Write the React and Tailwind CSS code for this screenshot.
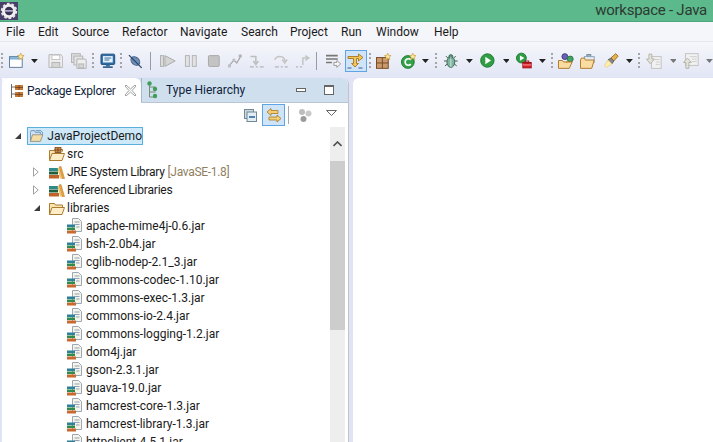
import React from "react";

const font = { fontFamily: "Roboto, 'Noto Sans', sans-serif" };

const menus = [
  ["File", "w-[32px]"],
  ["Edit", "w-[34px]"],
  ["Source", "w-[50px]"],
  ["Refactor", "w-[58px]"],
  ["Navigate", "w-[61px]"],
  ["Search", "w-[49px]"],
  ["Project", "w-[51px]"],
  ["Run", "w-[35px]"],
  ["Window", "w-[58px]"],
  ["Help", "w-[40px]"],
];

function AppIcon() {
  return (
    <svg width="18" height="18" viewBox="0 0 18 18">
      <rect x="0" y="0" width="18" height="18" fill="#4a3f6b" />
      <circle cx="9" cy="9" r="7" fill="#f1f1f1" stroke="#e8e8e8" strokeWidth="2.400" strokeDasharray="2.600 1.800" />
      <circle cx="9" cy="9" r="5.200" fill="#f4f4f4" />
      <circle cx="9" cy="9" r="4.200" fill="#3a3159" />
      <rect x="4.800" y="8.200" width="8.400" height="1.400" fill="#c9c4de" />
    </svg>
  );
}

function Grip({ className = "" }) {
  return (
    <div className={`flex h-[16px] w-[2px] flex-col justify-between ${className}`}>
      <span className="block h-[2px] w-[2px] bg-[#a5a5a5]" />
      <span className="block h-[2px] w-[2px] bg-[#a5a5a5]" />
      <span className="block h-[2px] w-[2px] bg-[#a5a5a5]" />
      <span className="block h-[2px] w-[2px] bg-[#a5a5a5]" />
    </div>
  );
}

function Arrow({ className = "", color = "#222" }) {
  return (
    <svg width="7" height="4" viewBox="0 0 7 4" className={className}>
      <path d="M0 0h7L3.500 4z" fill={color} />
    </svg>
  );
}

function Sep({ className = "" }) {
  return <div className={`h-[18px] w-[1px] bg-[#9a9ca3] ${className}`} />;
}

function Ico({ w = 16, h = 16, className = "", children }) {
  return (
    <svg width={w} height={h} viewBox="0 0 16 16" className={className}>
      {children}
    </svg>
  );
}

function NewIcon({ className }) {
  return (
    <Ico className={className}>
      <rect x="0.500" y="3.500" width="13" height="11" fill="#fff" stroke="#5f7f9f" />
      <rect x="1" y="4" width="12" height="2.500" fill="#7fb0dc" />
      <path d="M12 0l1 2.200 2.400.300-1.800 1.600.5 2.400-2.100-1.200-2.100 1.200.5-2.400-1.800-1.600 2.400-.3z" fill="#fbe7a0" stroke="#c79a3a" strokeWidth="0.700" />
    </Ico>
  );
}

function SaveIcon({ className }) {
  return (
    <Ico className={className}>
      <path d="M1 1.500h12l2 2v11H1z" fill="#eee" stroke="#b5b5b5" />
      <rect x="4" y="2" width="8" height="4.500" fill="#fff" stroke="#c4c4c4" />
      <rect x="4" y="9.500" width="8" height="5" fill="#d6d6d6" stroke="#b5b5b5" />
    </Ico>
  );
}

function SaveAllIcon({ className }) {
  return (
    <Ico className={className}>
      <rect x="0.500" y="0.500" width="9" height="9" fill="#ddd" stroke="#b5b5b5" />
      <rect x="3" y="3" width="9" height="9" fill="#e4e4e4" stroke="#b5b5b5" />
      <path d="M6 6h8.500l1 1v8.500H6z" fill="#eee" stroke="#b0b0b0" />
      <rect x="8" y="11" width="5" height="4" fill="#d6d6d6" stroke="#b5b5b5" />
    </Ico>
  );
}

function MonitorIcon({ className }) {
  return (
    <Ico className={className}>
      <rect x="1" y="1" width="14" height="10.500" rx="1" fill="#2f6ea5" stroke="#1f4f7f" />
      <rect x="3" y="3" width="10" height="6.500" fill="#eaf2fa" />
      <path d="M4.500 5h7M4.500 7h5" stroke="#2f6ea5" strokeWidth="1" />
      <rect x="6" y="11.500" width="4" height="2" fill="#2f6ea5" />
      <rect x="3" y="13.500" width="10" height="1.500" fill="#1f4f7f" />
    </Ico>
  );
}

function SkipIcon({ className }) {
  return (
    <Ico className={className}>
      <ellipse cx="7.500" cy="8" rx="5" ry="3.700" transform="rotate(40 7.500 8)" fill="#6f8fb5" stroke="#3b5a86" />
      <path d="M1 2l13 13" stroke="#29476f" strokeWidth="1.300" />
    </Ico>
  );
}

function ResumeIcon({ className }) {
  return (
    <Ico className={className}>
      <rect x="0.500" y="2.500" width="3" height="11" fill="#ddd" stroke="#b0b0b0" />
      <path d="M5 2.500L15.500 8 5 13.500z" fill="#d5d5d5" stroke="#aaa" />
    </Ico>
  );
}

function PauseIcon({ className }) {
  return (
    <Ico className={className}>
      <rect x="2.500" y="2.500" width="4" height="11" fill="#e3e3e3" stroke="#b3b3b3" />
      <rect x="9.500" y="2.500" width="4" height="11" fill="#e3e3e3" stroke="#b3b3b3" />
    </Ico>
  );
}

function StopIcon({ className }) {
  return (
    <Ico className={className}>
      <rect x="2.500" y="2.500" width="11" height="11" rx="1" fill="#c4c4c4" stroke="#a8a8a8" />
    </Ico>
  );
}

function DisconnectIcon({ className }) {
  return (
    <Ico className={className}>
      <path d="M2 13L7 7l3 3 4-7" fill="none" stroke="#a5a5a5" strokeWidth="1.200" />
      <circle cx="2.500" cy="13" r="1.800" fill="#c0c0c0" />
      <circle cx="7" cy="7" r="1.500" fill="#c0c0c0" />
      <circle cx="13.500" cy="3" r="1.800" fill="#b5b5b5" />
    </Ico>
  );
}

function StepInIcon({ className }) {
  return (
    <Ico className={className}>
      <path d="M1.500 3.500H7v6M4.500 8L7 11.500 9.500 8" fill="none" stroke="#bdbdbd" strokeWidth="1.500" />
      <path d="M1 14h4M7 14h2M11 14h4" stroke="#b5b5b5" strokeWidth="1.200" />
    </Ico>
  );
}

function StepOverIcon({ className }) {
  return (
    <Ico className={className}>
      <path d="M2 7c0-5 10-5 10 1M9.500 6.500l2.500 3.500 2.500-3.500" fill="none" stroke="#c4c4c4" strokeWidth="1.500" />
      <path d="M2 14h4M8 14h2M12 14h3" stroke="#b5b5b5" strokeWidth="1.200" />
    </Ico>
  );
}

function StepRetIcon({ className }) {
  return (
    <Ico className={className}>
      <path d="M8 12V5h5M10.500 2.500L14 5l-3.500 2.500" fill="none" stroke="#c4c4c4" strokeWidth="1.500" />
      <path d="M1 14h2M5 14h2" stroke="#b5b5b5" strokeWidth="1.200" />
    </Ico>
  );
}

function ListIcon({ className }) {
  return (
    <Ico className={className}>
      <path d="M0 2.500h12M0 6h12M0 9.500h6" stroke="#777" strokeWidth="1.700" />
      <path d="M8 9.500h3V7.500l4 3.500-4 3.500v-2H8z" fill="#f5f5f5" stroke="#888" strokeWidth="0.800" />
    </Ico>
  );
}

function FilterIcon({ className }) {
  return (
    <Ico w={17} h={16} className={className}>
      <path d="M0.500 3.500H11V1l4.500 3.500L11 8V5.500H9v5h2L7.500 14 4 10.500h2v-5H0.500z" fill="#f3c45a" stroke="#a9771c" strokeWidth="0.900" />
      <path d="M0 15h4M11 15h4" stroke="#3b5a86" strokeWidth="1.200" />
    </Ico>
  );
}

function OpenTypeIcon({ className }) {
  return (
    <Ico className={className}>
      <rect x="0.500" y="4.500" width="12" height="11" fill="#c99a6b" stroke="#7a4a26" />
      <path d="M6.500 4.500v11M0.500 10h12" stroke="#7a4a26" />
      <path d="M12 0l1 2.200 2.400.3-1.800 1.600.5 2.400-2.100-1.200-2.100 1.200.5-2.400-1.800-1.600 2.400-.3z" fill="#fbe7a0" stroke="#c79a3a" strokeWidth="0.700" />
    </Ico>
  );
}

function NewClassIcon({ className }) {
  return (
    <Ico className={className}>
      <circle cx="7" cy="9" r="6.500" fill="#33a04a" stroke="#1f7a34" />
      <path d="M10 6.800A3.300 3.300 0 1 0 10 11.200" fill="none" stroke="#fff" strokeWidth="1.700" />
      <path d="M12 0l1 2.200 2.400.3-1.800 1.600.5 2.400-2.100-1.200-2.100 1.200.5-2.400-1.800-1.600 2.400-.3z" fill="#fbe7a0" stroke="#c79a3a" strokeWidth="0.700" />
    </Ico>
  );
}

function BugIcon({ className }) {
  return (
    <Ico className={className}>
      <path d="M3 3l2 2M13 3l-2 2M1 8h3M15 8h-3M2 13l2.500-2M14 13l-2.500-2" stroke="#4a5a4a" strokeWidth="1" />
      <ellipse cx="8" cy="9" rx="4" ry="5.500" fill="#7db5a0" stroke="#3d6d5c" />
      <circle cx="8" cy="3.500" r="2" fill="#5f8f80" stroke="#3d6d5c" />
      <path d="M8 4v10" stroke="#d4e6dc" />
    </Ico>
  );
}

function RunIcon({ className }) {
  return (
    <Ico w={15} h={15} className={className}>
      <circle cx="8" cy="8" r="7.300" fill="#2f9e44" stroke="#1e7a33" />
      <path d="M5.800 3.800L12 8l-6.200 4.200z" fill="#fff" />
    </Ico>
  );
}

function ExtIcon({ className }) {
  return (
    <Ico w={16} h={17} className={className}>
      <circle cx="5.500" cy="5.500" r="5" fill="#2f9e44" stroke="#1e7a33" />
      <path d="M4 2.800L8.500 5.500 4 8.200z" fill="#fff" />
      <rect x="7" y="10" width="8.500" height="5.500" fill="#d8202a" stroke="#9c1019" />
      <rect x="9.500" y="8.500" width="3.500" height="2" fill="none" stroke="#9c1019" />
      <path d="M7 12.500h8.500" stroke="#ff9a9a" />
    </Ico>
  );
}

function TaskIcon({ className }) {
  return (
    <Ico className={className}>
      <circle cx="7" cy="3.500" r="3" fill="#6a5fb0" stroke="#453a86" />
      <circle cx="12.500" cy="6" r="3" fill="#43a564" stroke="#2a7a45" />
      <path d="M0.500 7.500h4l1 1.500h4l-1 0h6l-3 6.500H0.500z" fill="#fbdca0" stroke="#b07a2c" />
    </Ico>
  );
}

function FolderIcon({ className }) {
  return (
    <Ico className={className}>
      <rect x="7" y="1.500" width="4" height="2" fill="#a9b8c8" stroke="#6f8296" />
      <rect x="4.500" y="3.500" width="10" height="6" fill="#e3ecf5" stroke="#8fa3b8" />
      <path d="M0.500 7l1-2h3l1 2h9l-2.500 8.500H0.500z" fill="#fbdca0" stroke="#b07a2c" />
    </Ico>
  );
}

function PencilIcon({ className }) {
  return (
    <Ico className={className}>
      <path d="M8 5l5-4.500 2.500 2.500L11 8z" fill="#e6b350" stroke="#a0702a" />
      <path d="M5 7l3-2 3 3-2 3z" fill="#8a8a8a" stroke="#5f5f5f" />
      <path d="M5 7l4 4-5.500 3.500L1.500 13z" fill="#fff0b0" stroke="#e5c870" strokeWidth="0.700" />
    </Ico>
  );
}

function NextAnnoIcon({ className }) {
  return (
    <Ico className={className}>
      <rect x="5.500" y="3.500" width="10" height="12" fill="#f1f1f1" stroke="#c2c2c2" />
      <path d="M8 6.500h6M10 9h4M10 11.500h4" stroke="#cfcfcf" />
      <path d="M3 1h3v5h2.500L4.500 11 .5 6H3z" fill="#e3e3dc" stroke="#b4b4aa" />
    </Ico>
  );
}

function PrevAnnoIcon({ className }) {
  return (
    <Ico className={className}>
      <rect x="2.500" y="0.500" width="13" height="12" fill="#f1f1f1" stroke="#c2c2c2" />
      <path d="M7 3.500h7M9 6h5M9 8.500h5" stroke="#cfcfcf" />
      <path d="M3 15.500v-6H.5L4.500 5l4 4.500H6v6z" fill="#e3e3dc" stroke="#b4b4aa" />
    </Ico>
  );
}

function PackageIcon() {
  return (
    <svg width="13" height="14" viewBox="0 0 13 14" className="shrink-0">
      <path d="M1.500 0v14M1.500 3H5M1.500 10H5" stroke="#6b6b6b" />
      <rect x="5" y="1" width="8" height="5" fill="#c77a35" />
      <rect x="5" y="8" width="8" height="5" fill="#c77a35" />
      <path d="M9 1v5M5 3.500h8M9 8v5M5 10.500h8" stroke="#6e3d14" strokeWidth="0.800" />
    </svg>
  );
}

function HierarchyIcon() {
  return (
    <svg width="11" height="18" viewBox="0 0 11 18" className="shrink-0">
      <path d="M2.500 2v9h6M2.500 6h6M2.500 11v5h6" fill="none" stroke="#7a8a7a" />
      <circle cx="2.500" cy="2.500" r="2.200" fill="#3e9e58" />
      <circle cx="8" cy="8" r="2.200" fill="#3e9e58" />
      <circle cx="8" cy="15" r="2.200" fill="#3e9e58" />
    </svg>
  );
}

function ProjectIcon() {
  return (
    <svg width="16" height="14" viewBox="0 0 16 14">
      <path d="M0.500 13.500V2.500l1-2h4l1 2h6v2" fill="#cfe2f3" stroke="#5f8ab0" />
      <path d="M0.500 13.500L3 5.500h12.500l-3 8z" fill="#f6dca5" stroke="#8b8b7a" />
      <path d="M7 0.500h6l2 2v3" fill="none" stroke="#5f8ab0" />
    </svg>
  );
}

function SrcIcon() {
  return (
    <svg width="16" height="14" viewBox="0 0 16 14">
      <path d="M0.500 13.500V3.500h5v-1h8v2" fill="#fbe3b0" stroke="#a97c2f" />
      <path d="M0.500 13.500L3 6.500h12.500l-2.500 7z" fill="#fdeec8" stroke="#a97c2f" />
      <rect x="6" y="0.500" width="6" height="5" fill="#c98a4c" stroke="#6e3d14" strokeWidth="0.700" />
      <path d="M9 0.500v5M6 3h6" stroke="#6e3d14" strokeWidth="0.700" />
    </svg>
  );
}

function OpenFolderIcon() {
  return (
    <svg width="16" height="13" viewBox="0 0 16 13">
      <path d="M0.500 12.500V1.500h5l1 1.500h7v2" fill="#fbe3b0" stroke="#a97c2f" />
      <path d="M0.500 12.500L3 5.500h12.500l-2.500 7z" fill="#fdeec8" stroke="#a97c2f" />
    </svg>
  );
}

function LibraryIcon() {
  return (
    <svg width="16" height="13" viewBox="0 0 16 13">
      <rect x="0" y="2" width="9" height="3" fill="#2f8a8a" />
      <rect x="0" y="5.500" width="9" height="3" fill="#1f5f3f" />
      <rect x="0" y="9" width="10" height="3.500" fill="#c0622a" />
      <path d="M10 1l2-.5 3.500 12h-2.500z" fill="#e8a33d" stroke="#a9702a" strokeWidth="0.500" />
      <path d="M8.500 2.500l1.500-.5 3 10.500h-2z" fill="#f2c569" />
    </svg>
  );
}

function JarIcon() {
  return (
    <svg width="16" height="16" viewBox="0 0 16 16">
      <path d="M5.500 0.500h6l3 3v10h-9z" fill="#f6f4e6" stroke="#9aa7b8" />
      <path d="M7.500 4h5M7.500 6.500h5M9 9h3.500" stroke="#8fa3c0" />
      <rect x="0" y="6.500" width="8" height="2.500" fill="#2d7f9a" />
      <rect x="0" y="9.500" width="8" height="2.500" fill="#2f8a4c" />
      <rect x="0" y="12.500" width="9" height="3" fill="#c9692f" />
    </svg>
  );
}

const jars = [
  "apache-mime4j-0.6.jar",
  "bsh-2.0b4.jar",
  "cglib-nodep-2.1_3.jar",
  "commons-codec-1.10.jar",
  "commons-exec-1.3.jar",
  "commons-io-2.4.jar",
  "commons-logging-1.2.jar",
  "dom4j.jar",
  "gson-2.3.1.jar",
  "guava-19.0.jar",
  "hamcrest-core-1.3.jar",
  "hamcrest-library-1.3.jar",
  "httpclient-4.5.1.jar",
];

function Twisty({ open }) {
  return open ? (
    <svg width="8" height="8" viewBox="0 0 8 8">
      <path d="M7 1v6H1z" fill="#3c3c3c" />
    </svg>
  ) : (
    <svg width="6" height="10" viewBox="0 0 6 10">
      <path d="M.5.800L5.200 5 .5 9.200z" fill="#fff" stroke="#a0a0a0" />
    </svg>
  );
}

function TreeRow({ twisty, icon, children }) {
  return (
    <div className="flex h-[18px] items-center whitespace-nowrap pl-[31px]">
      <span className="flex w-[16px] shrink-0 items-center">{twisty}</span>
      <span className="flex w-[18px] shrink-0 items-center">{icon}</span>
      {children}
    </div>
  );
}

export default function App() {
  return (
    <div className="flex h-[442px] w-[713px] flex-col overflow-hidden bg-[#dfe3f5] text-[12px] text-[#1a1a1a]" style={font}>
      <div className="flex h-[22px] shrink-0 items-center border-b border-[#4fa67c] bg-[#5cb98b]">
        <AppIcon />
        <span className="ml-auto pr-[6px] text-[15px] tracking-[-0.25px] text-[#2c3a33]">workspace - Java</span>
      </div>

      <div className="flex h-[19px] shrink-0 items-center bg-[#f5f6fa] pl-[6px]">
        {menus.map(([label, width]) => (
          <span key={label} className={width}>{label}</span>
        ))}
      </div>

      <div className="flex h-[36px] shrink-0 items-center border-t border-[#e6e7ec] bg-gradient-to-b from-[#f6f7fb] to-[#e2e6f5] pt-[2px]">
        <Grip className="ml-[1px]" />
        <NewIcon className="ml-[6px]" />
        <Arrow className="ml-[6px]" />
        <SaveIcon className="ml-[10px]" />
        <SaveAllIcon className="ml-[8px]" />
        <Grip className="ml-[5px]" />
        <MonitorIcon className="ml-[6px]" />
        <Grip className="ml-[4px]" />
        <SkipIcon className="ml-[6px]" />
        <Sep className="ml-[7px]" />
        <ResumeIcon className="ml-[9px]" />
        <PauseIcon className="ml-[7px]" />
        <StopIcon className="ml-[7px]" />
        <DisconnectIcon className="ml-[6px]" />
        <StepInIcon className="ml-[6px]" />
        <StepOverIcon className="ml-[8px]" />
        <StepRetIcon className="ml-[7px]" />
        <Sep className="ml-[5px]" />
        <ListIcon className="ml-[9px]" />
        <div className="ml-[3px] flex h-[22px] w-[23px] items-center justify-center border border-[#5fa5e5] bg-[#cfe4f8]">
          <FilterIcon />
        </div>
        <Grip className="ml-[2px]" />
        <OpenTypeIcon className="ml-[5px]" />
        <NewClassIcon className="ml-[9px]" />
        <Arrow className="ml-[6px]" />
        <Grip className="ml-[6px]" />
        <BugIcon className="ml-[6px]" />
        <Arrow className="ml-[7px]" />
        <RunIcon className="ml-[7px]" />
        <Arrow className="ml-[8px]" />
        <ExtIcon className="ml-[7px]" />
        <Arrow className="ml-[7px]" />
        <Grip className="ml-[5px]" />
        <TaskIcon className="ml-[5px]" />
        <FolderIcon className="ml-[6px]" />
        <PencilIcon className="ml-[8px]" />
        <Arrow className="ml-[7px]" />
        <Grip className="ml-[5px]" />
        <NextAnnoIcon className="ml-[6px]" />
        <Arrow className="ml-[8px]" color="#777" />
        <PrevAnnoIcon className="ml-[7px]" />
        <Arrow className="ml-[7px]" color="#777" />
      </div>

      <div className="flex min-h-0 flex-1 pl-[2px] pt-px">
        <div className="flex w-[347px] shrink-0 flex-col overflow-hidden rounded-tr-[6px] border-r border-[#c4c4c4] bg-white">
          <div className="flex h-[25px] shrink-0 items-end rounded-t-[6px] border-b border-[#b7c5d6] bg-[#cfdfee]">
            <div className="relative top-px flex h-[25px] w-[139px] shrink-0 items-center rounded-t-[6px] bg-white pl-[8px]">
              <PackageIcon />
              <span className="ml-[4px] whitespace-nowrap tracking-[-0.25px] text-[#10233d]">Package Explorer</span>
              <svg width="13" height="13" viewBox="0 0 13 13" className="ml-[8px] shrink-0">
                <path d="M2 1l4.500 4L11 1l1 1-4 4.500 4 4.500-1 1-4.500-4L2 12l-1-1 4-4.500L1 2z" fill="#fff" stroke="#8a8a8a" strokeWidth="0.800" />
              </svg>
            </div>
            <div className="flex h-[24px] flex-1 items-center border-l border-[#a9b7c8] pl-[5px]">
              <HierarchyIcon />
              <span className="ml-[8px] whitespace-nowrap text-[#10233d]">Type Hierarchy</span>
              <div className="ml-auto mr-[14px] flex items-center gap-[18px]">
                <div className="h-[4px] w-[10px] border border-[#666] bg-white" />
                <div className="h-[10px] w-[10px] border border-[#666] border-t-[2px] bg-white" />
              </div>
            </div>
          </div>

          <div className="flex h-[24px] shrink-0 items-center justify-end pr-[11px]">
            <svg width="13" height="13" viewBox="0 0 13 13">
              <rect x="0.500" y="0.500" width="9" height="9" fill="#cfd8dc" stroke="#6f8a96" />
              <rect x="3" y="3" width="9.500" height="9.500" fill="#e3edf3" stroke="#6f8a96" />
              <path d="M5 8h6" stroke="#1f5f9f" strokeWidth="1.300" />
            </svg>
            <div className="ml-[5px] flex h-[22px] w-[23px] items-center justify-center border border-[#5fa5e5] bg-[#cfe4f8]">
              <svg width="16" height="15" viewBox="0 0 16 15">
                <path d="M1 4l4-3.500V2.500h7v3H5v2z" fill="#f3cf7a" stroke="#a9771c" strokeWidth="0.800" />
                <path d="M15 10.500l-4 3.500V12H3V9h8V7z" fill="#f3cf7a" stroke="#a9771c" strokeWidth="0.800" />
              </svg>
            </div>
            <div className="ml-[3px] h-[18px] w-[1px] bg-[#a9a9a9]" />
            <svg width="14" height="14" viewBox="0 0 14 14" className="ml-[9px]">
              <circle cx="4" cy="4" r="3" fill="#bdbdbd" />
              <circle cx="10.500" cy="5.500" r="3" fill="#c9c9c9" />
              <circle cx="5.500" cy="11" r="3" fill="#9c9c9c" />
            </svg>
            <svg width="11" height="6" viewBox="0 0 11 6" className="ml-[14px] mb-[4px]">
              <path d="M.5.500h10L5.500 5.500z" fill="#fff" stroke="#666" />
            </svg>
          </div>

          <div className="flex min-h-0 flex-1">
            <div className="min-w-0 flex-1 overflow-hidden">
              <div className="flex h-[18px] items-center pl-[12px]">
                <span className="flex w-[13px] shrink-0 items-center"><Twisty open /></span>
                <div className="flex h-[18px] w-[116px] items-center border border-[#5ab0dc] bg-[#cde8f8] pl-[2px]">
                  <ProjectIcon />
                  <span className="ml-[4px] whitespace-nowrap">JavaProjectDemo</span>
                </div>
              </div>
              <TreeRow icon={<SrcIcon />}>src</TreeRow>
              <TreeRow twisty={<Twisty />} icon={<LibraryIcon />}>
                <span className="tracking-[-0.3px]">JRE System Library</span>
                <span className="ml-[3px] tracking-[-0.3px] text-[#8f7f5f]">[JavaSE-1.8]</span>
              </TreeRow>
              <TreeRow twisty={<Twisty />} icon={<LibraryIcon />}>
                <span className="tracking-[-0.2px]">Referenced Libraries</span>
              </TreeRow>
              <TreeRow twisty={<Twisty open />} icon={<OpenFolderIcon />}>libraries</TreeRow>
              {jars.map((jar) => (
                <div key={jar} className="flex h-[18px] items-center whitespace-nowrap pl-[65px]">
                  <span className="flex w-[19px] shrink-0 items-center"><JarIcon /></span>
                  {jar}
                </div>
              ))}
            </div>
            <div className="mr-[3px] flex w-[15px] shrink-0 flex-col bg-[#eeeeee]">
              <div className="flex h-[34px] shrink-0 items-center justify-center">
                <svg width="9" height="6" viewBox="0 0 9 6">
                  <path d="M.5 5l4-4 4 4" fill="none" stroke="#505050" strokeWidth="1.600" />
                </svg>
              </div>
              <div className="h-[169px] w-full shrink-0 bg-[#cdcdcd]" />
            </div>
          </div>
        </div>

        <div className="ml-[4px] flex-1 rounded-tl-[6px] bg-white" />
      </div>
    </div>
  );
}
